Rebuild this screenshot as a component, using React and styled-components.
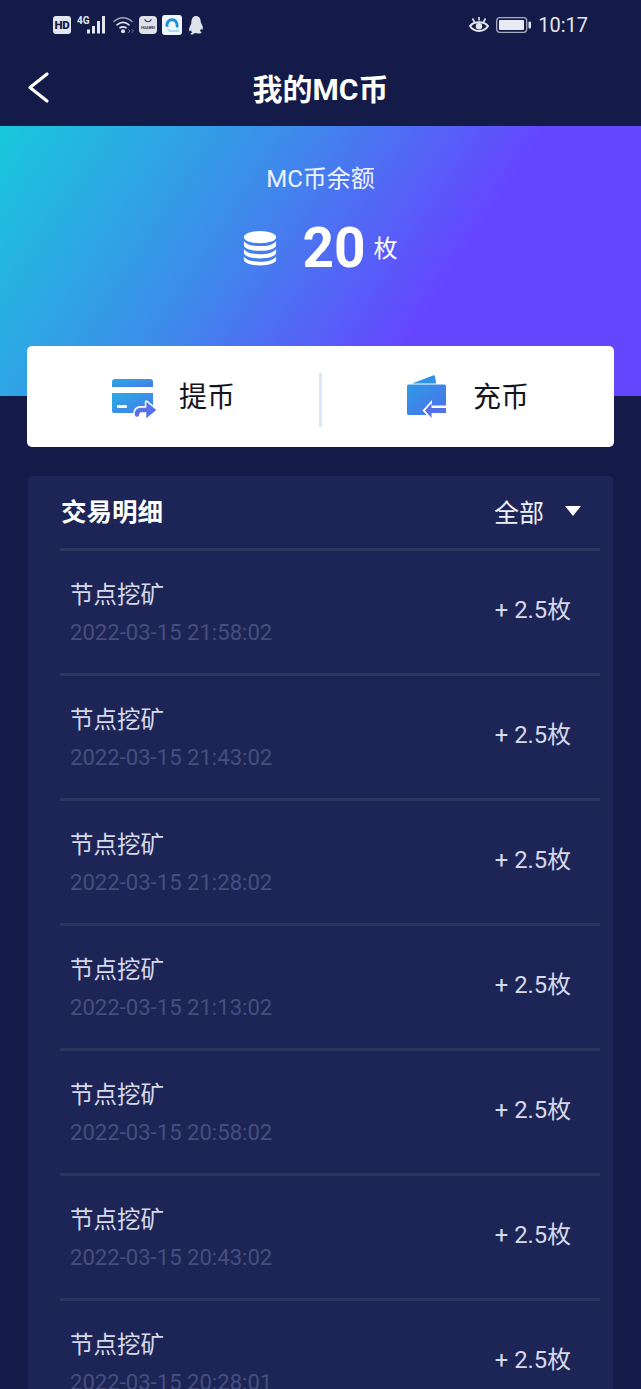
// Libraries
import React from 'react';
import styled, { createGlobalStyle } from 'styled-components';

const GlobalStyle = createGlobalStyle`
  html, body {
    margin: 0;
    padding: 0;
    background: #141b48;
  }
  * {
    box-sizing: border-box;
  }
`;

const FONT = `Roboto, "Noto Sans CJK SC", sans-serif`;

// Styled Components
const Page = styled.div`
  width: 641px;
  height: 1389px;
  overflow: hidden;
  background: #141b48;
  font-family: ${FONT};
`;

const StatusBar = styled.div`
  display: flex;
  align-items: center;
  justify-content: space-between;
  height: 50px;
  padding: 0 53px;
  color: #e4e6ef;
`;

const StatusGroup = styled.div`
  display: flex;
  align-items: center;
  gap: ${p => p.$gap}px;
`;

const HdBadge = styled.span`
  display: flex;
  align-items: center;
  justify-content: center;
  width: 18px;
  height: 18px;
  border-radius: 3px;
  background: #e4e6ef;
  color: #141b48;
  font-size: 11.5px;
  font-weight: 900;
  letter-spacing: -0.3px;
`;

const Clock = styled.span`
  font-size: 20px;
  color: #e4e6ef;
`;

const NavBar = styled.div`
  position: relative;
  display: flex;
  align-items: center;
  justify-content: center;
  height: 76px;
`;

const BackButton = styled.svg`
  position: absolute;
  left: 26px;
  top: 20px;
`;

const NavTitle = styled.h1`
  margin: 0 0 2px;
  font-size: 30px;
  font-weight: 700;
  color: #fff;
`;

const Hero = styled.section`
  display: flex;
  flex-direction: column;
  align-items: center;
  height: 270px;
  padding-top: 37px;
  background: linear-gradient(123deg, #19c8dc 0%, #3c8eea 35%, #6546ff 67%, #6546ff 100%);
`;

const HeroLabel = styled.div`
  font-size: 24px;
  line-height: 32px;
  color: #eef4ff;
`;

const Balance = styled.div`
  display: flex;
  align-items: center;
  margin-top: 21px;
  color: #fff;
`;

const BalanceNumber = styled.span`
  margin-left: 25px;
  font-size: 55px;
  line-height: 64px;
  font-weight: 700;
`;

const BalanceUnit = styled.span`
  margin: -4px 0 0 8px;
  font-size: 24px;
`;

const ActionCard = styled.div`
  position: relative;
  display: flex;
  align-items: center;
  height: 101px;
  margin: -50px 27px 0 27px;
  border-radius: 5px;
  background: #fff;
`;

const ActionItem = styled.div`
  flex: 1;
  display: flex;
  align-items: center;
  justify-content: center;
  gap: ${p => p.$gap}px;
`;

const ActionLabel = styled.span`
  margin-bottom: 4px;
  font-size: 28px;
  color: #14141c;
`;

const ActionDivider = styled.div`
  width: 3px;
  height: 54px;
  margin-top: 6px;
  background: #dce6f6;
`;

const WithdrawSvg = styled.svg`
  margin-top: 4px;
`;

const Panel = styled.section`
  margin: 29px 28px 0 28px;
  padding: 0 13px 0 32px;
  border-radius: 4px;
  background: #1d2556;
`;

const PanelHeader = styled.div`
  display: flex;
  align-items: center;
  justify-content: space-between;
  height: 75px;
  padding: 0 19px 6px 1px;
  border-bottom: 3px solid #2e3660;
`;

const PanelTitle = styled.h2`
  margin: 0;
  font-size: 25.5px;
  font-weight: 700;
  color: #fff;
`;

const Filter = styled.div`
  display: flex;
  align-items: center;
  gap: 21px;
  margin-top: 4px;
  font-size: 25px;
  color: #eef0f8;
`;

const Caret = styled.span`
  width: 0;
  height: 0;
  margin-top: -1px;
  border-left: 8px solid transparent;
  border-right: 8px solid transparent;
  border-top: 10px solid #fff;
`;

const Row = styled.div`
  display: flex;
  align-items: center;
  justify-content: space-between;
  height: 125px;
  padding: 0 29px 10px 10px;
  border-bottom: 3px solid #2e3660;
`;

const RowText = styled.div`
  padding-top: 12px;
`;

const RowName = styled.div`
  font-size: 23.5px;
  line-height: 34px;
  color: #d6d9ea;
`;

const RowDate = styled.div`
  margin-top: 3px;
  font-size: 22.1px;
  line-height: 34px;
  color: #474e7e;
`;

const RowAmount = styled.div`
  font-size: 23.8px;
  color: #d6d9ea;
`;

// Icons
const SignalIcon = () => (
  <svg width="32" height="20" viewBox="0 0 32 20">
    <text x="1" y="9" fontSize="10" fontWeight="700" fill="#e4e6ef" fontFamily="Roboto">4G</text>
    <g fill="#e4e6ef">
      <rect x="11" y="14.500" width="3" height="4" />
      <rect x="16" y="11" width="3" height="7.500" />
      <rect x="21" y="6" width="3" height="12.500" />
      <rect x="26" y="1" width="3" height="17.500" />
    </g>
  </svg>
);

const WifiIcon = () => (
  <svg width="21" height="18" viewBox="0 0 21 18" fill="none" strokeLinecap="round">
    <path d="M1 5.500C6.500 .5 13.500 .5 19 5.500" stroke="#9ea2b8" strokeWidth="1.400" />
    <path d="M4 8.800C8 5.600 12 5.600 16 8.800" stroke="#e4e6ef" strokeWidth="1.700" />
    <path d="M7 11.800C9 10.500 11 10.500 13 11.800" stroke="#e4e6ef" strokeWidth="1.700" />
    <circle cx="10" cy="15.300" r="2" fill="#e4e6ef" />
    <path d="M15.500 13.500l1.500 1.500-1.500 1.500M19 13.500l1.500 1.500-1.500 1.500" stroke="#777c99" strokeWidth="1" />
  </svg>
);

const StoreIcon = () => (
  <svg width="18" height="18" viewBox="0 0 18 18">
    <rect width="18" height="18" rx="4" fill="#dfe1ea" />
    <path d="M6 3.500c.5 3 5.500 3 6 0" fill="none" stroke="#30345a" strokeWidth="1.200" strokeLinecap="round" />
    <text x="9" y="12.500" fontSize="3.800" fontWeight="700" textAnchor="middle" fill="#30345a" fontFamily="Roboto">HUAWEI</text>
  </svg>
);

const BrowserIcon = () => (
  <svg width="20" height="20" viewBox="0 0 20 20">
    <rect width="20" height="20" rx="3" fill="#eef6fb" />
    <path d="M3.500 11.500C3 6.500 6.500 3 10.500 3.300c4 .3 6.500 3.700 6 9.200h-2.700C14 8.800 13 6.300 10.300 6.200 7.600 6 5.800 8.500 6.500 12z" fill="#1e8fd8" />
    <path d="M4.500 12.500c3 3 8.500 3.500 12.500 1.500v3H7z" fill="#a9d8f2" />
  </svg>
);

const PenguinIcon = () => (
  <svg width="18" height="20" viewBox="0 0 18 20" fill="#dfe1ea">
    <path d="M9 1c3 0 4.600 2.400 4.700 5.400 0 1 .5 1.600 1.200 3 1 2 1.300 4 .8 5-.4.600-1 0-1.600-1-.2 1-.7 1.900-1.400 2.500 1 .4 1.800.9 1.800 1.500 0 .8-2 1.100-3.300 1-.9-.1-1.500-.4-2.200-.4s-1.300.3-2.200.4C5.500 20 3.500 19.700 3.500 18.900c0-.6.8-1.100 1.800-1.500-.7-.6-1.200-1.500-1.400-2.500-.6 1-1.200 1.600-1.600 1-.5-1-.2-3 .8-5 .7-1.400 1.200-2 1.200-3C4.400 3.400 6 1 9 1z" />
  </svg>
);

const EyeIcon = () => (
  <svg width="22" height="20" viewBox="0 0 22 20" fill="none" stroke="#e4e6ef" strokeWidth="2">
    <path d="M2 11C6 6 16 6 20 11 16 17.500 6 17.500 2 11z" />
    <circle cx="11" cy="11.300" r="3.200" fill="#e4e6ef" stroke="none" />
    <path d="M4.500 3.500l2 3.500M11 2v3.500M17.500 3.500l-2 3.500" strokeWidth="1.600" />
  </svg>
);

const BatteryIcon = () => (
  <svg width="36" height="18" viewBox="0 0 36 18">
    <rect x=".7" y="1.700" width="30" height="14.600" rx="3" fill="none" stroke="#a9adc4" strokeWidth="1.300" />
    <rect x="3" y="4" width="25" height="10" rx="1" fill="#e9ebf2" />
    <rect x="32.500" y="5.500" width="2.500" height="7" rx="1" fill="#e4e6ef" />
  </svg>
);

const CoinsIcon = () => (
  <svg width="34" height="36" viewBox="0 0 36 38" fill="#fff">
    <ellipse cx="18" cy="7.500" rx="17" ry="6.500" />
    <path d="M1 11.500C4 16 11 17 18 17s14-1 17-5.500V16c0 3.500-7.600 6-17 6S1 19.500 1 16z" />
    <path d="M1 20c3 4.500 10 5.500 17 5.500S32 24.500 35 20v4c0 3.500-7.600 6-17 6S1 27.500 1 24z" />
    <path d="M1 28c3 4.500 10 5.500 17 5.500S32 32.500 35 28v3.500c0 3.500-7.600 6-17 6s-17-2.500-17-6z" />
  </svg>
);

const WithdrawIcon = () => (
  <WithdrawSvg width="46" height="40" viewBox="0 0 46 40">
    <defs>
      <linearGradient id="withdrawFill" x1="0" y1="0" x2="1" y2="1">
        <stop offset="0" stopColor="#27ace2" />
        <stop offset="1" stopColor="#4a78ec" />
      </linearGradient>
    </defs>
    <path d="M3 0h36a3 3 0 0 1 3 3v5H1V3a3 3 0 0 1 2-3z" fill="url(#withdrawFill)" />
    <path d="M1 14h41v18a2 2 0 0 1-2 2H3a2 2 0 0 1-2-2z" fill="url(#withdrawFill)" />
    <rect x="6" y="26" width="10" height="3" rx="1" fill="#fff" />
    <path d="M26 36c0-3.500 1.500-5 4-5h7" fill="none" stroke="#fff" strokeWidth="8" strokeLinecap="round" />
    <path d="M35.300 22.700L45.300 31l-10 8.300z" fill="#5570ea" stroke="#fff" strokeWidth="3" strokeLinejoin="round" />
    <path d="M26 35.500c0-3 1.500-4.500 4-4.500h7" fill="none" stroke="#5570ea" strokeWidth="4.500" strokeLinecap="round" />
    <path d="M35.300 22.700L45.300 31l-10 8.300z" fill="#5570ea" />
  </WithdrawSvg>
);

const RechargeIcon = () => (
  <svg width="40" height="44" viewBox="0 0 40 44">
    <defs>
      <linearGradient id="rechargeFill" x1="0" y1="0" x2="1" y2="1">
        <stop offset="0" stopColor="#2f9ae6" />
        <stop offset="1" stopColor="#4d70ec" />
      </linearGradient>
    </defs>
    <path d="M5 8.500L26 .5c1-.4 1.800 0 2 1l1.200 7z" fill="#2f92e6" />
    <path d="M1.500 9.500h36a1.500 1.500 0 0 1 1.500 1.500v29H1.500A1.500 1.500 0 0 1 0 38.500V11a1.500 1.500 0 0 1 1.500-1.500z" fill="url(#rechargeFill)" />
    <path d="M25 25L15.500 35.500 25 46v-5.500h14v-10H25z" fill="#fff" />
    <path d="M24.500 28L18 35.500 24.500 43v-5H39v-5H24.500z" fill="#5570ea" />
  </svg>
);

const records = [
  '2022-03-15 21:58:02',
  '2022-03-15 21:43:02',
  '2022-03-15 21:28:02',
  '2022-03-15 21:13:02',
  '2022-03-15 20:58:02',
  '2022-03-15 20:43:02',
  '2022-03-15 20:28:01',
];

// Component
export default function App() {
  return (
    <Page>
      <GlobalStyle />
      <StatusBar>
        <StatusGroup $gap={5}>
          <HdBadge>HD</HdBadge>
          <SignalIcon />
          <WifiIcon />
          <StoreIcon />
          <BrowserIcon />
          <PenguinIcon />
        </StatusGroup>
        <StatusGroup $gap={6}>
          <EyeIcon />
          <BatteryIcon />
          <Clock>10:17</Clock>
        </StatusGroup>
      </StatusBar>
      <NavBar>
        <BackButton width="24" height="36" viewBox="0 0 24 36" fill="none" stroke="#fff" strokeWidth="3.200" strokeLinecap="round" strokeLinejoin="round">
          <path d="M21 4L4 17.500 21 31" />
        </BackButton>
        <NavTitle>我的MC币</NavTitle>
      </NavBar>
      <Hero>
        <HeroLabel>MC币余额</HeroLabel>
        <Balance>
          <CoinsIcon />
          <BalanceNumber>20</BalanceNumber>
          <BalanceUnit>枚</BalanceUnit>
        </Balance>
      </Hero>
      <ActionCard>
        <ActionItem $gap={22}>
          <WithdrawIcon />
          <ActionLabel>提币</ActionLabel>
        </ActionItem>
        <ActionDivider />
        <ActionItem $gap={26}>
          <RechargeIcon />
          <ActionLabel>充币</ActionLabel>
        </ActionItem>
      </ActionCard>
      <Panel>
        <PanelHeader>
          <PanelTitle>交易明细</PanelTitle>
          <Filter>
            全部
            <Caret />
          </Filter>
        </PanelHeader>
        {records.map(date => (
          <Row key={date}>
            <RowText>
              <RowName>节点挖矿</RowName>
              <RowDate>{date}</RowDate>
            </RowText>
            <RowAmount>+ 2.5枚</RowAmount>
          </Row>
        ))}
      </Panel>
    </Page>
  );
}
